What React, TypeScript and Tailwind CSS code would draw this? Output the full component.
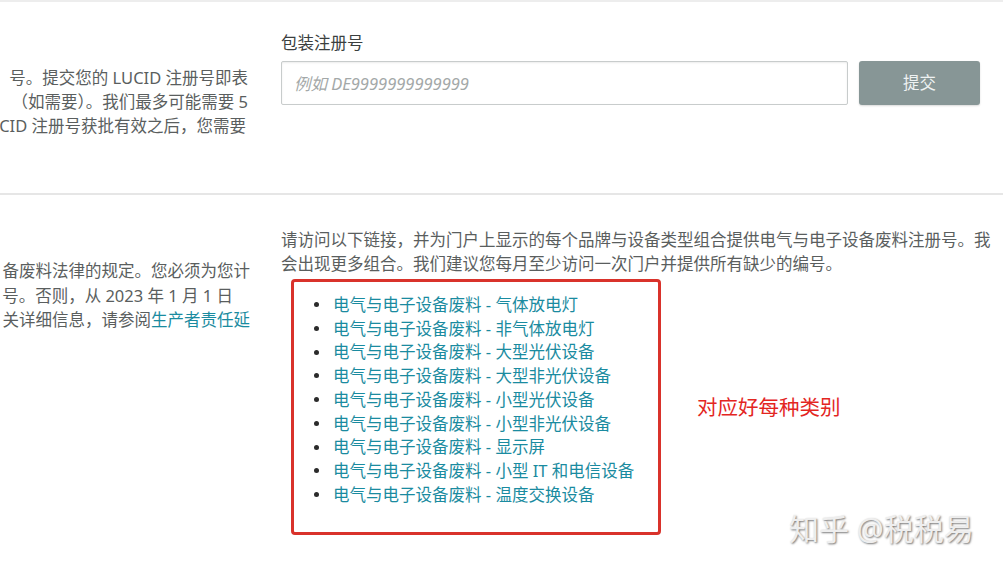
import React from "react";

const items = [
  "气体放电灯",
  "非气体放电灯",
  "大型光伏设备",
  "大型非光伏设备",
  "小型光伏设备",
  "小型非光伏设备",
  "显示屏",
  "小型 IT 和电信设备",
  "温度交换设备",
];

const font = { fontFamily: '"Noto Sans", "Noto Sans CJK SC", sans-serif' };

export default function App() {
  return (
    <div
      className="relative h-[569px] w-[1003px] overflow-hidden bg-white text-[16.5px] text-[#5a5e5e]"
      style={font}
    >
      <div className="h-[2px] bg-[#ededed]" />

      {/* LUCID */}
      <section className="flex h-[191px] gap-[31px]">
        <div className="flex w-[250px] shrink-0 flex-col items-end pt-[64px] leading-[24px] whitespace-nowrap">
          <p className="pr-[2px]">号。提交您的 LUCID 注册号即表</p>
          <p className="pr-[2px]">（如需要）。我们最多可能需要 5</p>
          <p className="pr-[4px]">CID 注册号获批有效之后，您需要</p>
        </div>
        <div className="flex-1 pt-[31px]">
          <label className="block leading-[20px] text-[#3b3f3f]">包装注册号</label>
          <div className="mt-[8px] flex items-center gap-[11px]">
            <input
              className="h-[44px] w-[567px] rounded-[2px] border border-[#c8cccc] px-[12px] text-[16.5px] italic placeholder:text-[#a3a8a8] shadow-[inset_0_1px_2px_rgba(0,0,0,0.08)]"
              placeholder="例如 DE9999999999999"
              style={font}
            />
            <button className="h-[44px] w-[121px] rounded-[3px] bg-[#879696] text-[16.5px] text-[#eef2f2] shadow-[0_1px_2px_rgba(0,0,0,0.15)]">
              提交
            </button>
          </div>
        </div>
      </section>

      <div className="h-[2px] bg-[#e6e6e6]" />

      {/* WEEE */}
      <section className="flex gap-[31px]">
        <div className="flex w-[250px] shrink-0 flex-col items-end pt-[64px] leading-[24.5px] whitespace-nowrap">
          <p>备废料法律的规定。您必须为您计</p>
          <p className="pr-[17px]">号。否则，从 2023 年 1 月 1 日</p>
          <p>
            关详细信息，请参阅<span className="text-[#1a8ba0]">生产者责任延</span>
          </p>
        </div>
        <div className="flex-1 pt-[33px]">
          <div className="leading-[23.5px] whitespace-nowrap">
            <p>请访问以下链接，并为门户上显示的每个品牌与设备类型组合提供电气与电子设备废料注册号。我</p>
            <p>会出现更多组合。我们建议您每月至少访问一次门户并提供所有缺少的编号。</p>
          </div>
          <div className="mt-[4px] flex items-center">
            <div className="ml-[10px] h-[256px] w-[370px] rounded-[4px] border-[3px] border-[#d9322b]">
              <ul className="pt-[11px] pl-[20px] leading-[23.7px]">
                {items.map((t) => (
                  <li key={t} className="flex items-center">
                    <span className="mr-[14px] h-[5px] w-[5px] rounded-full bg-[#2b2b2b]" />
                    <span className="text-[#1a8ba0]">电气与电子设备废料 - {t}</span>
                  </li>
                ))}
              </ul>
            </div>
            <span className="ml-[36px] text-[20.5px] text-[#e3261f]">对应好每种类别</span>
          </div>
        </div>
      </section>

      {/* watermark */}
      <div className="absolute left-[789px] top-[510px] text-[30px] leading-[38px] text-[#eeeeee] [text-shadow:1px_1px_2px_#777]">
        知乎 @税税易
      </div>
    </div>
  );
}
